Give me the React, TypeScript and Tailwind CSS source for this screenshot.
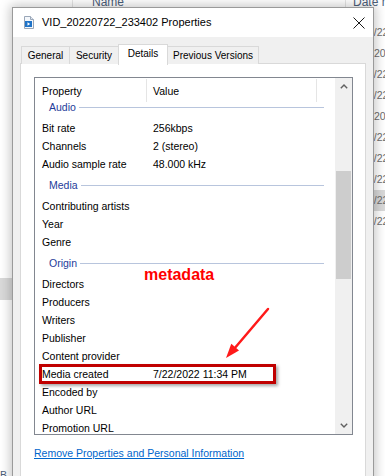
import React from "react";

const audio = [
  ["Bit rate", "256kbps"],
  ["Channels", "2 (stereo)"],
  ["Audio sample rate", "48.000 kHz"],
];
const media = [["Contributing artists", ""], ["Year", ""], ["Genre", ""]];
const origin = [
  ["Directors", ""],
  ["Producers", ""],
  ["Writers", ""],
  ["Publisher", ""],
  ["Content provider", ""],
  ["Media created", "7/22/2022 11:34 PM"],
  ["Encoded by", ""],
  ["Author URL", ""],
  ["Promotion URL", ""],
];

const bgRows = [
  { t: "7/22/2022 11:34 PM", p: false },
  { t: "2022 10:05 AM", p: true },
  { t: "7/22/2022 9:12 PM", p: false },
  { t: "5/22/2022 8:40 PM", p: false },
  { t: "2022 7:15 PM", p: true },
  { t: "7/22/2022 6:02 PM", p: false },
  { t: "7/22/2022 5:44 PM", p: false },
  { t: "7/22/2022 4:31 PM", p: false },
  { t: "7/22/2022 11:34 PM", p: false, hl: true },
  { t: "7/22/2022 3:20 PM", p: false },
];

function Group({ name }: { name: string }) {
  return (
    <div className="h-[24px] flex items-center pl-[14px] pr-[11px]">
      <span className="text-[#1e3c9a] leading-[12px]">{name}</span>
      <div className="flex-1 h-px bg-[#b8c5dd] ml-[3px]" />
    </div>
  );
}

function Row({ p, v }: { p: string; v: string }) {
  return (
    <div className="h-[18px] flex items-center pl-[7px] whitespace-nowrap leading-[12px]">
      <span className="w-[111px] shrink-0">{p}</span>
      <span>{v}</span>
    </div>
  );
}

function Chevron({ up }: { up?: boolean }) {
  return (
    <svg width="8" height="5" viewBox="0 0 8 5">
      <path
        d={up ? "M0.8 4.3 L4 1.1 L7.2 4.3" : "M0.8 0.7 L4 3.9 L7.2 0.7"}
        fill="none"
        stroke="#606060"
        strokeWidth="1.4"
      />
    </svg>
  );
}

export default function App() {
  return (
    <div className="relative w-[385px] h-[476px] overflow-hidden bg-white font-['Liberation_Sans',Arial,sans-serif] text-black">
      {/* Explorer window behind */}
      <div className="flex flex-col h-full">
        <div className="h-[7px] overflow-hidden flex text-[12px] text-[#4c607a] shrink-0">
          <div className="w-[73px] shrink-0 border-r border-[#e5e5e5]" />
          <div className="w-[273px] shrink-0 border-r border-[#e5e5e5] pl-[19px] leading-[12px] -mt-[4px]">Name</div>
          <div className="shrink-0 pl-[7px] leading-[12px] -mt-[4px] whitespace-nowrap">Date modified</div>
        </div>
        <div className="flex flex-1">
          <div className="w-[12px] flex flex-col shrink-0">
            <div className="h-[271px]" />
            <div className="h-[22px] bg-[#d9d9d9]" />
            <div className="flex-1" />
            <div className="text-[10.5px] text-[#4c607a] leading-[12px] -ml-[7px] -mb-[5px] whitespace-nowrap">KB</div>
          </div>
          <div className="flex flex-col pt-[15px] ml-[356px] text-[10.5px] text-[#6d6d6d] whitespace-nowrap">
            {bgRows.map((r, i) => (
              <div
                key={i}
                className={`h-[21px] w-[40px] flex items-center overflow-hidden ${r.hl ? "bg-[#d9d9d9]" : ""} ${r.p ? "pl-[6px]" : ""}`}
              >
                {r.t}
              </div>
            ))}
          </div>
        </div>
      </div>

      {/* Properties dialog */}
      <div className="absolute left-[12px] top-[7px] w-[362px] h-[490px] border border-[#9a9a9a] bg-[#f0f0f0] flex flex-col shadow-[0_0_10px_2px_rgba(0,0,0,0.22)]">
        <div className="h-[29px] bg-white flex items-center pl-[11px] pr-[8px] shrink-0">
          <svg width="10" height="13" viewBox="0 0 10 13">
            <path d="M0.5 0.5 H6.5 L9.5 3.5 V12.5 H0.5 Z" fill="#f4f7fb" stroke="#9aa7b8" />
            <path d="M6.5 0.5 V3.5 H9.5" fill="#dfe6ef" stroke="#9aa7b8" />
            <rect x="1" y="5" width="7" height="6" fill="#1f73c8" />
            <path d="M3.5 6.3 L6.2 8 L3.5 9.7 Z" fill="#ffffff" />
          </svg>
          <span className="ml-[8px] text-[11px] leading-[13px] whitespace-nowrap">VID_20220722_233402 Properties</span>
          <div className="flex-1" />
          <svg width="12" height="12" viewBox="0 0 12 12">
            <path d="M0.5 0.5 L11.5 11.5 M11.5 0.5 L0.5 11.5" stroke="#1a1a1a" strokeWidth="1" />
          </svg>
        </div>

        <div className="flex-1 flex flex-col pt-[7px] px-[7px]">
          <div className="relative z-10 h-[20px] flex items-end pl-[1px] text-[10px] shrink-0">
            <div className="w-[49px] h-[18px] border border-b-0 border-[#d9d9d9] bg-[#f0f0f0] flex items-center justify-center">General</div>
            <div className="-ml-px w-[50px] h-[18px] border border-b-0 border-[#d9d9d9] bg-[#f0f0f0] flex items-center justify-center">Security</div>
            <div className="-ml-px w-[50px] h-[21px] -mb-px border border-b-0 border-[#d9d9d9] bg-white flex items-center justify-center pb-[3px]">Details</div>
            <div className="-ml-px w-[92px] h-[18px] border border-b-0 border-[#d9d9d9] bg-[#f0f0f0] flex items-center justify-center">Previous Versions</div>
          </div>

          <div className="-mt-px flex-1 border border-[#d9d9d9] bg-white pt-[13px] pl-[13px] text-[10.5px]">
            <div className="w-[319px] h-[358px] border border-[#828790] flex">
              <div className="relative flex-1 overflow-hidden">
                <div className="relative h-[17px] flex pt-[7px] leading-[12px]">
                  <span className="pl-[7px] w-[118px]">Property</span>
                  <span>Value</span>
                  <div className="absolute left-[111px] top-px w-px h-[23px] bg-[#e5e5e5]" />
                  <div className="absolute left-[281px] top-px w-px h-[23px] bg-[#e5e5e5]" />
                </div>
                <Group name="Audio" />
                {audio.map(([p, v]) => (
                  <Row key={p} p={p} v={v} />
                ))}
                <Group name="Media" />
                {media.map(([p, v]) => (
                  <Row key={p} p={p} v={v} />
                ))}
                <Group name="Origin" />
                {origin.map(([p, v]) => (
                  <Row key={p} p={p} v={v} />
                ))}
              </div>
              <div className="w-[17px] bg-[#f0f0f0] flex flex-col shrink-0">
                <div className="h-[17px] flex items-center justify-center">
                  <Chevron up />
                </div>
                <div className="mt-[76px] h-[108px] mx-[1px] bg-[#cdcdcd]" />
                <div className="flex-1" />
                <div className="h-[17px] flex items-center justify-center">
                  <Chevron />
                </div>
              </div>
            </div>
            <div className="mt-[12px] leading-[12px] text-[#0066cc] underline whitespace-nowrap">
              Remove Properties and Personal Information
            </div>
          </div>
        </div>
      </div>

      {/* Annotations */}
      <div className="absolute left-[144px] top-[266px] text-[16px] font-bold text-[#ff0000] leading-[18px]">metadata</div>
      <div className="absolute left-[39px] top-[364px] w-[237px] h-[20px] border-[3px] border-[#c00000] shadow-[2px_2px_3px_rgba(0,0,0,0.35)]" />
      <svg className="absolute left-0 top-0" width="385" height="476" viewBox="0 0 385 476">
        <line x1="268" y1="309" x2="234" y2="349" stroke="#ff1a1a" strokeWidth="2.5" strokeLinecap="round" />
        <path d="M226 358 L239 350.6 L231.3 343.8 Z" fill="#ff1a1a" />
      </svg>
    </div>
  );
}
